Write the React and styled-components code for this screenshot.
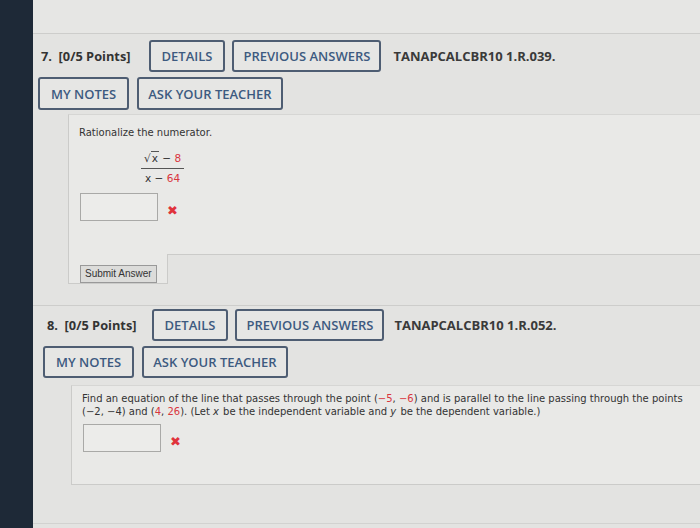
import React from 'react';
import styled, { createGlobalStyle } from 'styled-components';

const GlobalStyle = createGlobalStyle`
  html, body {
    margin: 0;
    padding: 0;
    background: #e2e2e0;
  }
`;

const Screen = styled.div`
  display: flex;
  width: 700px;
  height: 528px;
  overflow: hidden;
  font-family: 'Open Sans', 'Liberation Sans', sans-serif;
`;

const Sidebar = styled.div`
  width: 33px;
  flex-shrink: 0;
  background: #1e2937;
`;

const Main = styled.div`
  flex: 1;
  display: flex;
  flex-direction: column;
  background: #e3e3e1;
`;

const TopStrip = styled.div`
  height: 33px;
  flex-shrink: 0;
  background: #e6e6e4;
  border-bottom: 1px solid #cdcdcb;
`;

const Question = styled.section`
  display: flex;
  flex-direction: column;
  margin-top: ${(p) => p.offset || 0}px;
  padding-top: ${(p) => p.top}px;
  border-top: ${(p) => (p.divider ? '1px solid #cdcdcb' : 'none')};
`;

const HeaderRow = styled.div`
  display: flex;
  align-items: center;
  gap: 7px;
  padding-left: ${(p) => p.indent}px;
`;

const PointsLabel = styled.span`
  font-size: 12.8px;
  font-weight: 700;
  color: #333;
  margin-right: ${(p) => p.space}px;
  white-space: pre;
`;

const Code = styled.span`
  font-size: 13px;
  font-weight: 700;
  color: #3a3a3a;
  margin-left: ${(p) => p.space}px;
`;

const ActionButton = styled.button`
  height: ${(p) => (p.tall ? 33 : 32)}px;
  padding: 0 ${(p) => (p.narrow ? 9 : 11)}px;
  border: 2px solid #4e5d72;
  border-radius: 3px;
  background: #e6e6e4;
  color: #3d5a80;
  font-family: 'Open Sans', 'Liberation Sans', sans-serif;
  font-size: 13px;
  font-weight: 600;
  white-space: nowrap;
`;

const ToolRow = styled.div`
  display: flex;
  gap: 8px;
  margin-top: 5px;
  padding-left: ${(p) => p.indent}px;
`;

const Body = styled.div`
  margin-left: ${(p) => p.indent}px;
  margin-top: ${(p) => p.gap}px;
  padding: ${(p) => p.pad}px 10px 0 10px;
  height: ${(p) => p.h}px;
  box-sizing: border-box;
  background: #e9e9e7;
  border-left: 1px solid #cbcbc9;
  border-top: 1px solid #d6d6d4;
  border-bottom: 1px solid #cbcbc9;
  font-family: 'DejaVu Sans', Verdana, sans-serif;
  font-size: 10px;
  color: #333;
  line-height: 13px;
`;

const Prompt = styled.p`
  margin: 0;
`;

const Line = styled.span`
  display: block;
  white-space: nowrap;
`;

const Red = styled.span`
  color: #d9363e;
`;

const Var = styled.span`
  font-style: italic;
  padding-right: 1px;
`;

const Fraction = styled.div`
  display: inline-flex;
  flex-direction: column;
  align-items: center;
  margin: 13px 0 0 62px;
  font-size: 10.5px;
  line-height: 13px;
`;

const Numerator = styled.span`
  padding: 0 3px 3px;
  border-bottom: 1px solid #555;
  white-space: pre;
`;

const Denominator = styled.span`
  padding-top: 3px;
  white-space: pre;
`;

const Radical = styled.span`
  border-top: 1px solid #555;
  padding: 0 1px;
`;

const AnswerRow = styled.div`
  display: flex;
  align-items: center;
  gap: 9px;
  margin-top: ${(p) => p.top}px;
  margin-left: ${(p) => p.left || 0}px;
`;

const AnswerBox = styled.div`
  width: 76px;
  height: 26px;
  background: #ececea;
  border: 1px solid #a9a9a7;
`;

const WrongMark = styled.span`
  color: #e0333b;
  font-size: 13px;
  font-weight: 700;
  margin-top: 6px;
`;

const SubmitTab = styled.div`
  width: 100px;
  height: 30px;
  margin-left: ${(p) => p.indent}px;
  margin-top: -1px;
  box-sizing: border-box;
  padding: 6px 0 0 11px;
  background: #e9e9e7;
  border: 1px solid #cbcbc9;
  border-top: none;
`;

const SubmitButton = styled.button`
  height: 18px;
  padding: 0 4px;
  background: #dcdcda;
  border: 1px solid #999;
  font-family: 'Liberation Sans', Arial, sans-serif;
  font-size: 10px;
  color: #333;
`;

const BottomRule = styled.div`
  margin-top: auto;
  margin-bottom: 4px;
  height: 1px;
  background: #d2d2d0;
`;

export default function App() {
  return (
    <>
      <GlobalStyle />
      <Screen>
        <Sidebar />
        <Main>
          <TopStrip />
          <Question top={6}>
            <HeaderRow indent={8}>
              <PointsLabel space={11}>7.  [0/5 Points]</PointsLabel>
              <ActionButton>DETAILS</ActionButton>
              <ActionButton narrow>PREVIOUS ANSWERS</ActionButton>
              <Code space={5}>TANAPCALCBR10 1.R.039.</Code>
            </HeaderRow>
            <ToolRow indent={5}>
              <ActionButton tall>MY NOTES</ActionButton>
              <ActionButton tall narrow>ASK YOUR TEACHER</ActionButton>
            </ToolRow>
            <Body indent={35} gap={4} pad={11} h={141}>
              <Prompt>Rationalize the numerator.</Prompt>
              <Fraction>
                <Numerator>
                  √<Radical>x</Radical> − <Red>8</Red>
                </Numerator>
                <Denominator>
                  x − <Red>64</Red>
                </Denominator>
              </Fraction>
              <AnswerRow top={8} left={1}>
                <AnswerBox />
                <WrongMark>✖</WrongMark>
              </AnswerRow>
            </Body>
            <SubmitTab indent={35}>
              <SubmitButton>Submit Answer</SubmitButton>
            </SubmitTab>
          </Question>
          <Question top={3} divider offset={21}>
            <HeaderRow indent={14}>
              <PointsLabel space={8}>8.  [0/5 Points]</PointsLabel>
              <ActionButton>DETAILS</ActionButton>
              <ActionButton narrow>PREVIOUS ANSWERS</ActionButton>
              <Code space={3}>TANAPCALCBR10 1.R.052.</Code>
            </HeaderRow>
            <ToolRow indent={10}>
              <ActionButton>MY NOTES</ActionButton>
              <ActionButton narrow>ASK YOUR TEACHER</ActionButton>
            </ToolRow>
            <Body indent={38} gap={7} pad={6} h={100}>
              <Prompt>
                <Line>
                  Find an equation of the line that passes through the point (<Red>−5</Red>, <Red>−6</Red>) and is
                  parallel to the line passing through the points
                </Line>
                <Line>
                  (−2, −4) and (<Red>4</Red>, <Red>26</Red>). (Let <Var>x</Var> be the independent variable and{' '}
                  <Var>y</Var> be the dependent variable.)
                </Line>
              </Prompt>
              <AnswerRow top={6} left={1}>
                <AnswerBox />
                <WrongMark>✖</WrongMark>
              </AnswerRow>
            </Body>
          </Question>
          <BottomRule />
        </Main>
      </Screen>
    </>
  );
}
